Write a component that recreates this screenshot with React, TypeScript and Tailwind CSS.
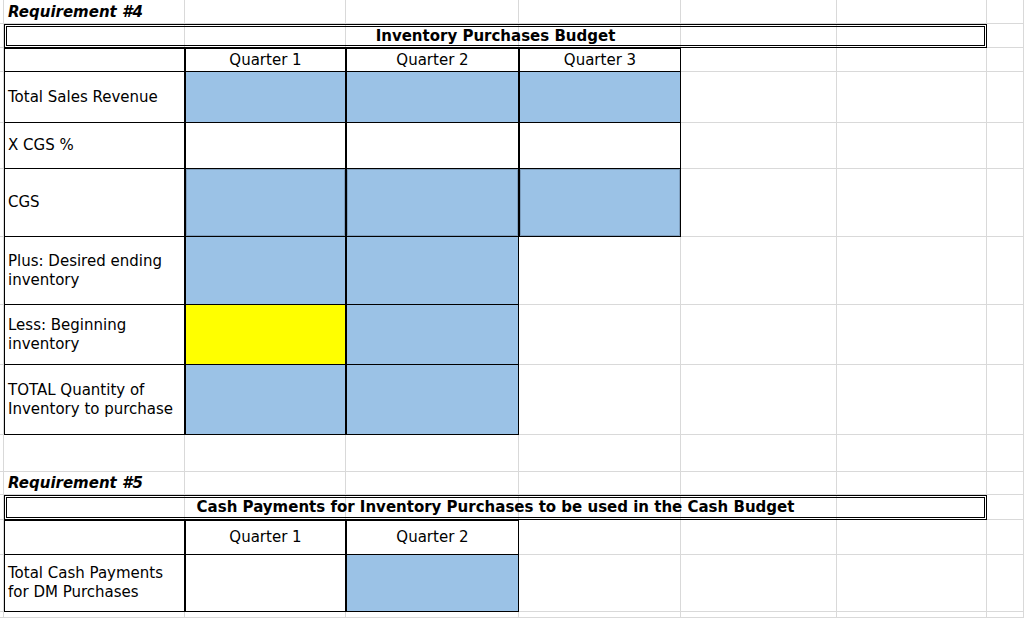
const cols = [4, 181, 161, 173, 162, 156, 150, 37];
const rows = [24, 24, 24, 51, 46, 68, 68, 60, 70, 37, 23, 25, 35, 57, 6];

type CellProps = {
  c: number;
  r: number;
  span?: number;
  className?: string;
  children?: React.ReactNode;
};

function Cell({ c, r, span = 1, className = "", children }: CellProps) {
  return (
    <div
      className={className}
      style={{ gridColumn: `${c} / span ${span}`, gridRow: `${r}` }}
    >
      {children}
    </div>
  );
}

const blue = "bg-[#9bc2e6]";
const box = "border border-black";

export default function App() {
  const grid = [];
  for (let r = 1; r <= rows.length; r++) {
    for (let c = 1; c <= cols.length; c++) {
      grid.push(
        <Cell key={`${r}-${c}`} c={c} r={r} className="border-r border-b border-[#d9d9d9]" />,
      );
    }
  }
  const label = `${box} -mt-px flex items-center px-[3px] text-[15px] leading-[19px] text-black`;
  return (
    <div
      className="grid h-[618px] w-[1024px] overflow-hidden bg-white text-[15px] text-black"
      style={{
        fontFamily: '"DejaVu Sans", Verdana, sans-serif',
        gridTemplateColumns: cols.map((w) => `${w}px`).join(" "),
        gridTemplateRows: rows.map((h) => `${h}px`).join(" "),
      }}
    >
      {grid}
      <Cell c={2} r={1} className="flex items-center px-[4px] text-[15px] font-bold italic">
        Requirement #4
      </Cell>
      <Cell c={2} r={2} span={6} className="flex items-center justify-center border-[3px] border-double border-black font-bold">
        Inventory Purchases Budget
      </Cell>
      <Cell c={2} r={3} className={box} />
      {["Quarter 1", "Quarter 2", "Quarter 3"].map((q, i) => (
        <Cell key={q} c={3 + i} r={3} className={`${box} flex items-center justify-center`}>
          {q}
        </Cell>
      ))}
      <Cell c={2} r={4} className={label}>Total Sales Revenue</Cell>
      <Cell c={2} r={5} className={label}>X CGS %</Cell>
      <Cell c={2} r={6} className={label}>CGS</Cell>
      <Cell c={2} r={7} className={label}>Plus: Desired ending<br />inventory</Cell>
      <Cell c={2} r={8} className={label}>Less: Beginning<br />inventory</Cell>
      <Cell c={2} r={9} className={label}>TOTAL Quantity of<br />Inventory to purchase</Cell>
      {[3, 4, 5].map((c) => (
        <Cell key={`a${c}`} c={c} r={4} className={`${box} -mt-px ${blue}`} />
      ))}
      {[3, 4, 5].map((c) => (
        <Cell key={`b${c}`} c={c} r={5} className={`${box} -mt-px bg-white`} />
      ))}
      {[3, 4, 5].map((c) => (
        <Cell key={`d${c}`} c={c} r={6} className={`${box} -mt-px ${blue} outline outline-1 -outline-offset-2 outline-[#7f9fbf]`} />
      ))}
      <Cell c={3} r={7} className={`${box} -mt-px ${blue}`} />
      <Cell c={4} r={7} className={`${box} -mt-px ${blue}`} />
      <Cell c={3} r={8} className={`${box} -mt-px bg-[#ffff00]`} />
      <Cell c={4} r={8} className={`${box} -mt-px ${blue}`} />
      <Cell c={3} r={9} className={`${box} -mt-px ${blue}`} />
      <Cell c={4} r={9} className={`${box} -mt-px ${blue}`} />

      <Cell c={2} r={11} className="flex items-center px-[4px] font-bold italic">
        Requirement #5
      </Cell>
      <Cell c={2} r={12} span={6} className="flex items-center justify-center border-[3px] border-double border-black font-bold">
        Cash Payments for Inventory Purchases to be used in the Cash Budget
      </Cell>
      <Cell c={2} r={13} className={box} />
      <Cell c={3} r={13} className={`${box} flex items-center justify-center`}>Quarter 1</Cell>
      <Cell c={4} r={13} className={`${box} flex items-center justify-center`}>Quarter 2</Cell>
      <Cell c={2} r={14} className={label}>Total Cash Payments<br />for DM Purchases</Cell>
      <Cell c={3} r={14} className={`${box} -mt-px bg-white`} />
      <Cell c={4} r={14} className={`${box} -mt-px ${blue}`} />
    </div>
  );
}
